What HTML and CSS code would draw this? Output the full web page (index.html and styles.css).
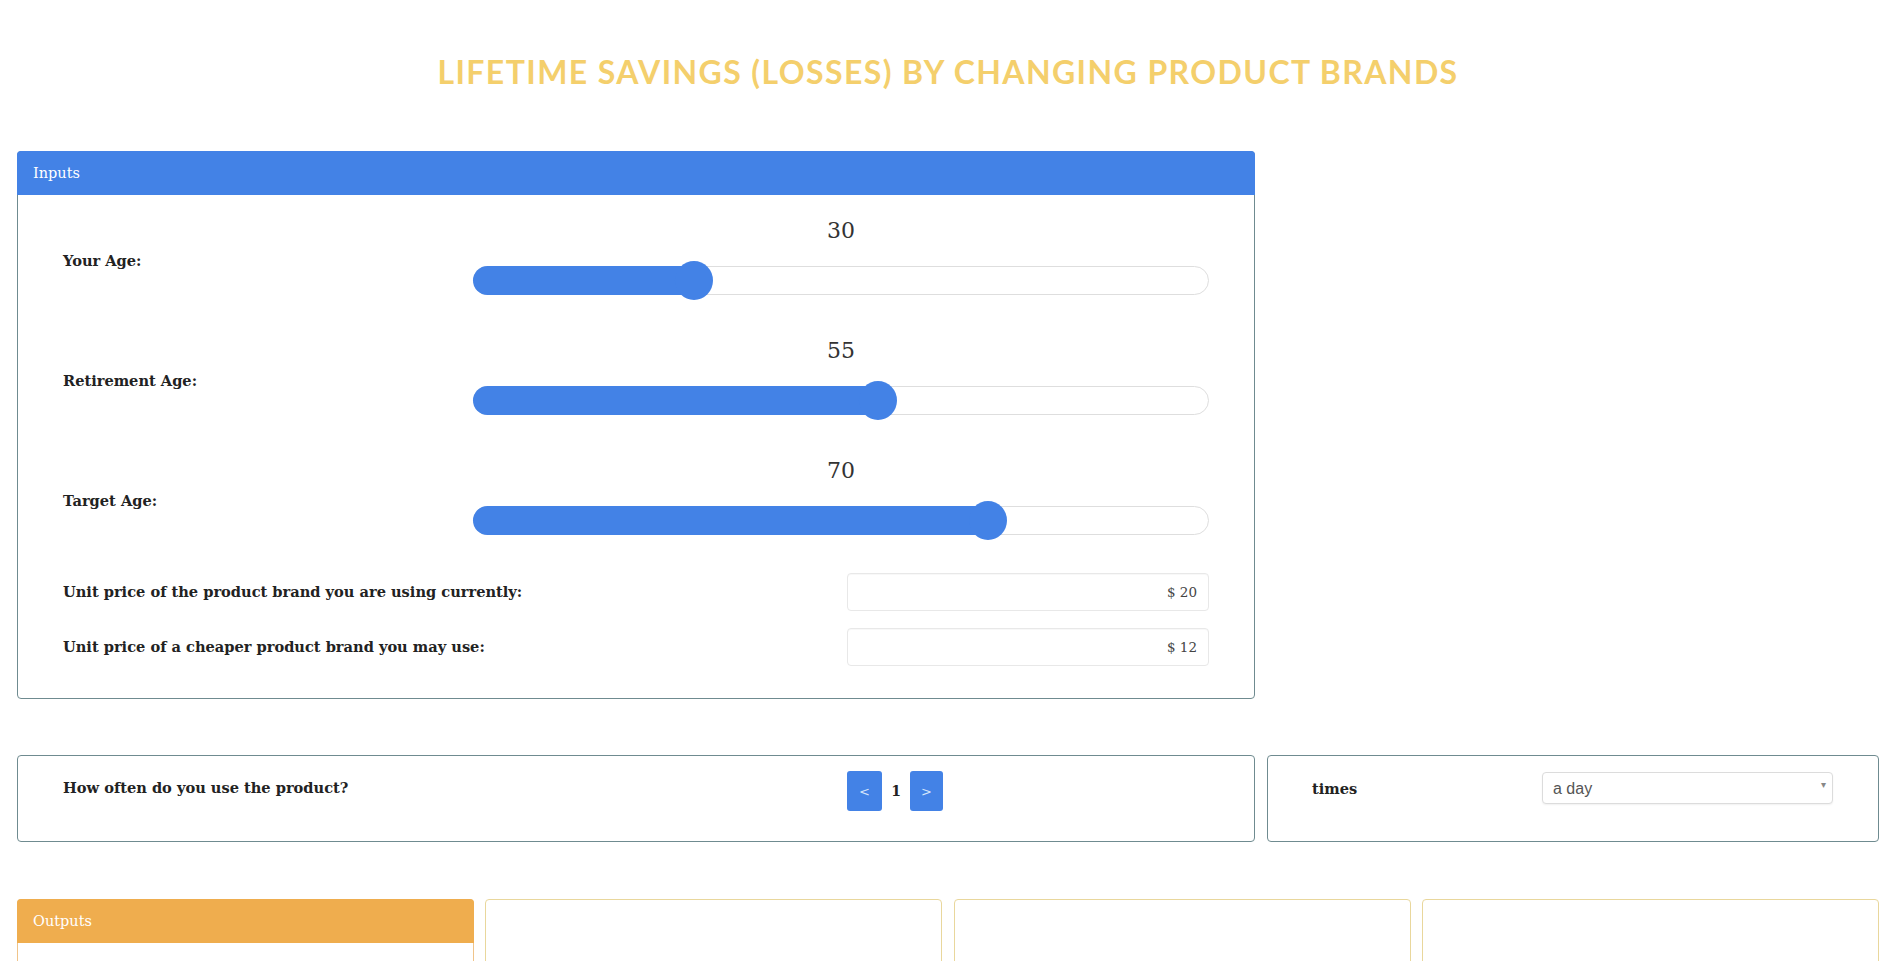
FILE: index.html
```html
<!DOCTYPE html>
<html lang="en">
<head>
    <meta charset="UTF-8">
    <title>Lifetime Savings by Changing Product Brands</title>
    <meta name="viewport" content="width=device-width, initial-scale=1.0">
    <link rel="stylesheet" href="styles.css">
</head>
<body>
    <div class="page">
        <h1 class="title">Lifetime Savings (Losses) by Changing Product Brands</h1>

        <div class="top-row">
            <div class="panel panel-blue">
                <div class="panel-heading">Inputs</div>
                <div class="panel-body">
                    <div class="slider-row">
                        <div class="label">Your Age:</div>
                        <div class="slider">
                            <div class="slider-value">30</div>
                            <div class="track-area">
                                <div class="track" style="--v:0.30">
                                    <div class="fill"></div>
                                    <div class="thumb"></div>
                                </div>
                            </div>
                        </div>
                    </div>
                    <div class="slider-row">
                        <div class="label">Retirement Age:</div>
                        <div class="slider">
                            <div class="slider-value">55</div>
                            <div class="track-area">
                                <div class="track" style="--v:0.55">
                                    <div class="fill"></div>
                                    <div class="thumb"></div>
                                </div>
                            </div>
                        </div>
                    </div>
                    <div class="slider-row">
                        <div class="label">Target Age:</div>
                        <div class="slider">
                            <div class="slider-value">70</div>
                            <div class="track-area">
                                <div class="track" style="--v:0.70">
                                    <div class="fill"></div>
                                    <div class="thumb"></div>
                                </div>
                            </div>
                        </div>
                    </div>

                    <div class="price-rows">
                        <div class="price-row">
                            <div class="label">Unit price of the product brand you are using currently:</div>
                            <input class="price-input" type="text" value="$ 20">
                        </div>
                        <div class="price-row">
                            <div class="label">Unit price of a cheaper product brand you may use:</div>
                            <input class="price-input" type="text" value="$ 12">
                        </div>
                    </div>
                </div>
            </div>
        </div>

        <div class="usage-row">
            <div class="panel usage-panel">
                <div class="label pad">How often do you use the product?</div>
                <div class="stepper">
                    <button class="step-btn">&lt;</button>
                    <span class="step-value">1</span>
                    <button class="step-btn">&gt;</button>
                </div>
            </div>
            <div class="panel times-panel">
                <div class="label pad">times</div>
                <div class="select-wrap">
                    <select class="period">
                        <option>a day</option>
                        <option>a week</option>
                        <option>a month</option>
                    </select>
                </div>
            </div>
        </div>

        <div class="outputs-row">
            <div class="panel panel-orange">
                <div class="panel-heading">Outputs</div>
            </div>
            <div class="panel panel-gold"></div>
            <div class="panel panel-gold"></div>
            <div class="panel panel-gold"></div>
        </div>
    </div>
</body>
</html>
```

FILE: styles.css
```css
body { margin: 0; background: #fff; font-family: "DejaVu Serif", serif; font-size: 14px; color: #333; }
.page { padding: 0 20px 0 17px; }

.title {
    margin: 0 0 59px; padding-top: 52px; line-height: 40px; text-align: center;
    font-family: Lato, "Open Sans", sans-serif; font-weight: 700; font-size: 32px;
    text-transform: uppercase; color: #f4cf6c; letter-spacing: 1.4px;
}

.panel { border: 1px solid #6f8b90; border-radius: 4px; background: #fff; }
.panel-heading {
    margin: -1px -1px 0; padding: 0 16px; line-height: 44px; height: 44px;
    border-radius: 4px 4px 0 0; color: #fff; font-size: 14.5px;
}
.panel-blue .panel-heading { background: #4382e6; }
.panel-orange { border-color: #f0c48a; height: 160px; }
.panel-orange .panel-heading { background: #efad4e; }
.panel-gold { border-color: #e9d79c; height: 160px; }

.label { font-weight: bold; font-size: 14.6px; line-height: 20px; color: #222; }

.top-row { display: grid; grid-template-columns: 1238fr 612fr; gap: 12px; }
.panel-blue .panel-body { padding: 21px 45px 32px; }

.slider-row { display: grid; grid-template-columns: 410px 1fr; margin-bottom: 36px; }
.slider-row .label { padding-top: 35px; }
.slider-value { text-align: center; font-size: 22px; line-height: 30px; color: #333; margin-bottom: 14px; }
.track-area { height: 40px; display: flex; align-items: center; }
.track {
    position: relative; flex: 1; height: 27px; border: 1px solid #dedede;
    border-radius: 15px; background: #fff;
}
.fill {
    position: absolute; left: -1px; top: -1px; bottom: -1px;
    width: calc(var(--v) * 100%);
    background: #4382e6; border-radius: 15px 0 0 15px;
}
.thumb {
    position: absolute; top: 50%; left: calc(var(--v) * 100% - 19px);
    width: 38px; height: 39px; margin-top: -19.5px; border-radius: 50%; background: #4382e6;
}

.price-rows { margin-top: -3px; display: flex; flex-direction: column; gap: 17px; }
.price-row { display: grid; grid-template-columns: 1fr 362px; align-items: center; }
.price-input {
    height: 38px; box-sizing: border-box; padding: 0 11px; text-align: right;
    font-family: "DejaVu Serif", serif; font-size: 13.5px; color: #444;
    border: 1px solid #e8e8e8; border-radius: 4px; box-shadow: inset 0 1px 1px rgba(0,0,0,0.03);
    outline: none;
}

.usage-row { display: grid; grid-template-columns: 1238fr 612fr; gap: 12px; margin-top: 56px; }
.usage-panel { display: grid; grid-template-columns: 1fr 362px; padding: 15px 45px 30px; }
.label.pad { padding-top: 7px; }
.stepper { display: flex; align-items: center; height: 40px; }
.step-btn {
    width: 35px; height: 40px; border: none; border-radius: 3px; background: #4382e6;
    color: #d6e5fb; font-family: "DejaVu Sans", sans-serif; font-size: 13px; padding: 0; cursor: pointer;
}
.step-btn + .step-value + .step-btn { width: 33px; }
.step-value { width: 28px; text-align: center; font-weight: bold; font-size: 14px; color: #222; }

.times-panel { display: grid; grid-template-columns: 230px 1fr; padding: 16px 45px 0 44px; }
.times-panel .label.pad { padding-top: 7px; }
.select-wrap { position: relative; }
.period {
    width: 100%; height: 32px; -webkit-appearance: none; appearance: none;
    border: 1px solid #dcdcdc; border-radius: 4px; background: #fff; padding: 0 10px;
    font-family: "Liberation Sans", Arial, sans-serif; font-size: 16px; color: #555;
    box-shadow: 0 1px 2px rgba(0,0,0,0.06); outline: none;
}
.select-wrap::after {
    content: "\25BE"; position: absolute; right: 7px; top: 7px;
    font-family: "DejaVu Sans", sans-serif; font-size: 10px; color: #888; pointer-events: none;
}

.outputs-row {
    display: grid; grid-template-columns: repeat(4, 1fr); gap: 11.5px; margin-top: 57px;
}
```
